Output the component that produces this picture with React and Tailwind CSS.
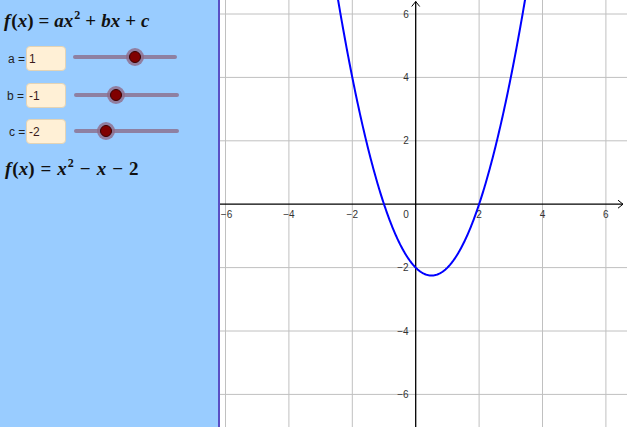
import React from "react";

const OX = 195.7;
const OY = 204.2;
const S = 31.7;

function Graph() {
  const pts = [];
  for (let x = -2.7; x <= 3.7; x += 0.02) {
    const y = x * x - x - 2;
    pts.push(`${(OX + x * S).toFixed(2)},${(OY - y * S).toFixed(2)}`);
  }
  const ticks = [-6, -4, -2, 2, 4, 6];
  const m = "\u2212";
  return (
    <svg width="407" height="427" viewBox="0 0 407 427" className="block">
      <rect x="0" y="0" width="407" height="427" fill="#ffffff" />
      {ticks.map((k) => (
        <line key={"v" + k} x1={OX + k * S} y1="0" x2={OX + k * S} y2="427" stroke="#c0c0c0" strokeWidth="1" />
      ))}
      {ticks.map((k) => (
        <line key={"h" + k} x1="0" y1={OY - k * S} x2="407" y2={OY - k * S} stroke="#c0c0c0" strokeWidth="1" />
      ))}
      <line x1="0" y1={OY} x2="403" y2={OY} stroke="#000" strokeWidth="1.3" />
      <polyline points={`398,${OY - 4} 403,${OY} 398,${OY + 4}`} fill="none" stroke="#000" strokeWidth="1" />
      <line x1={OX} y1="427" x2={OX} y2="1.5" stroke="#000" strokeWidth="1.3" />
      <polyline points={`${OX - 4},6.5 ${OX},1.5 ${OX + 4},6.5`} fill="none" stroke="#000" strokeWidth="1" />
      <g fontFamily="'Liberation Sans', Arial, sans-serif" fontSize="10" fill="#333">
        {ticks.map((k) => (
          <text key={"tx" + k} x={OX + k * S + (k === -6 ? 1 : 0)} y={OY + 14} textAnchor="middle">
            {k < 0 ? m + Math.abs(k) : k}
          </text>
        ))}
        <text x={OX - 7} y={OY + 14} textAnchor="end">0</text>
        {ticks.map((k) => (
          <text key={"ty" + k} x={OX - 7} y={OY - k * S + 3.5} textAnchor="end">
            {k < 0 ? m + Math.abs(k) : k}
          </text>
        ))}
      </g>
      <polyline points={pts.join(" ")} fill="none" stroke="#0000ff" strokeWidth="2" />
    </svg>
  );
}

function Slider({ value, width, dy }) {
  const left = ((value + 5) / 10) * width;
  return (
    <div className="relative h-[25px]" style={{ width: width + "px" }}>
      <div className={`absolute left-0 right-0 h-[4px] rounded-full bg-[#8e80a2] ${dy}`} />
      <div
        className={`absolute w-[18px] h-[18px] -ml-[9px] rounded-full bg-[#8e6a88]/80 flex items-center justify-center ${dy === "top-[9px]" ? "top-[2px]" : "top-[3px]"}`}
        style={{ left: left + "px" }}
      >
        <div className="w-[12px] h-[12px] rounded-full bg-[#800000] border border-[#3a0000]" />
      </div>
    </div>
  );
}

function Row({ label, value, text, mt, labelPl, sliderMl, width, dy }) {
  return (
    <div className={`flex items-center h-[25px] ${mt}`}>
      <div className={`w-[26px] ${labelPl} text-[12px] text-[#222] leading-none`}>{label}</div>
      <div className="w-[40px] h-[25px] rounded-[4px] bg-[#fff0d6] border border-[#e3d3b5] flex items-center pl-[2px] text-[12px] text-[#3a1a1a] leading-none">
        {text}
      </div>
      <div className={sliderMl}>
        <Slider value={value} width={width} dy={dy} />
      </div>
    </div>
  );
}

export default function App() {
  const mathFont = { fontFamily: "'Liberation Serif', 'Times New Roman', serif" };
  return (
    <div className="flex w-[627px] h-[427px] overflow-hidden" style={{ fontFamily: "'Liberation Sans', Arial, sans-serif" }}>
      <div className="w-[218px] h-[427px] bg-[#99ccff] flex flex-col">
        <div className="h-[40px] flex items-center pl-[4px] text-[19px] font-bold text-[#111] leading-none" style={mathFont}>
          <i>f</i>
          <span className="ml-[1px]">(</span>
          <i>x</i>
          <span>)</span>
          <span className="mx-[5px]">=</span>
          <i>ax</i>
          <span className="relative -top-[5px] text-[12px] ml-[1px]">2</span>
          <span className="mx-[5px]">+</span>
          <i>bx</i>
          <span className="mx-[5px]">+</span>
          <i>c</i>
        </div>
        <Row label="a =" value={1} text="1" mt="mt-[6px]" labelPl="pl-[8px]" sliderMl="ml-[7px]" width={104} dy="top-[9px]" />
        <Row label="b =" value={-1} text="-1" mt="mt-[12px]" labelPl="pl-[7px]" sliderMl="ml-[8px]" width={105} dy="top-[10px]" />
        <Row label="c =" value={-2} text="-2" mt="mt-[11px]" labelPl="pl-[9px]" sliderMl="ml-[8px]" width={105} dy="top-[10px]" />
        <div className="mt-[12px] h-[24px] flex items-center pl-[5px] text-[19px] font-bold text-[#111] leading-none" style={mathFont}>
          <i>f</i>
          <span className="ml-[1px]">(</span>
          <i>x</i>
          <span>)</span>
          <span className="mx-[6px]">=</span>
          <i>x</i>
          <span className="relative -top-[5px] text-[12px] ml-[1px]">2</span>
          <span className="mx-[6px]">{"\u2212"}</span>
          <i>x</i>
          <span className="mx-[6px]">{"\u2212"}</span>
          <span>2</span>
        </div>
      </div>
      <div className="w-[2px] h-[427px] bg-[#5a4fc4]" />
      <div className="flex-1">
        <Graph />
      </div>
    </div>
  );
}
